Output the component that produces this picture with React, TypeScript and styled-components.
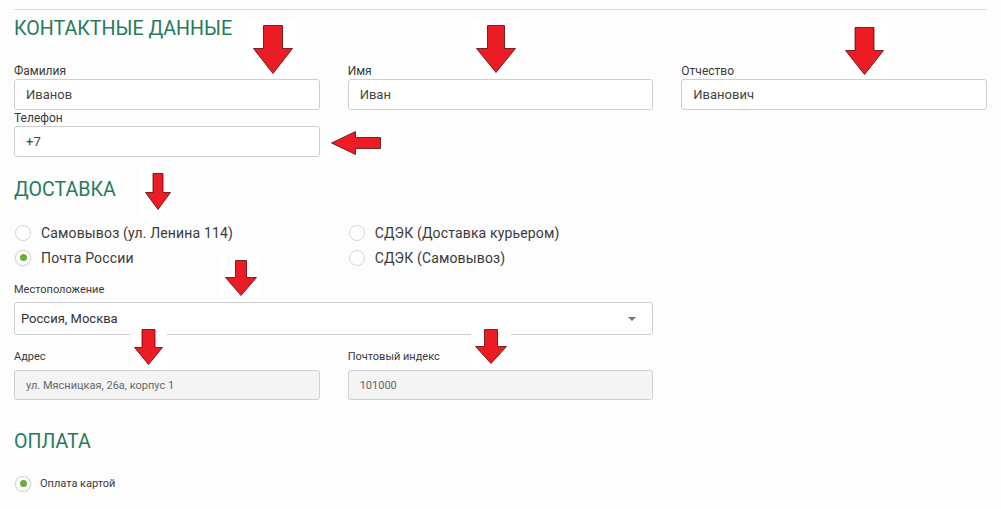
import React from 'react'
import styled, { createGlobalStyle } from 'styled-components'

const GlobalStyle = createGlobalStyle`
  html, body {
    margin: 0;
    padding: 0;
    background: #fdfdfd;
    font-family: Roboto, "Liberation Sans", Arial, sans-serif;
    color: #333;
  }
`

const Page = styled.div`
  position: relative;
  width: 1001px;
  height: 509px;
  padding: 9px 14px 0;
  box-sizing: border-box;
  overflow: hidden;
`

const Rule = styled.div`
  border-top: 1px solid #dcdcdc;
`

const Title = styled.h2<{ $top: number }>`
  margin: ${p => p.$top}px 0 0;
  font-size: 19.6px;
  line-height: 24px;
  font-weight: 400;
  color: #277a5c;
`

const Grid = styled.div<{ $top: number }>`
  display: grid;
  grid-template-columns: repeat(3, 1fr);
  column-gap: 28px;
  margin-top: ${p => p.$top}px;
`

const Field = styled.div<{ $span?: number }>`
  display: flex;
  flex-direction: column;
  grid-column: span ${p => p.$span || 1};
`

const Label = styled.label<{ $small?: boolean; $gap?: number }>`
  font-size: ${p => (p.$small ? '11px' : '12px')};
  line-height: ${p => (p.$small ? '14px' : '16px')};
  margin-bottom: ${p => p.$gap || 0}px;
  color: #3a3a3a;
`

const Input = styled.div<{ $disabled?: boolean; $h?: number }>`
  height: ${p => p.$h || 31}px;
  box-sizing: border-box;
  border: 1px solid #cfcfcf;
  border-radius: 3px;
  background: ${p => (p.$disabled ? '#f4f4f4' : '#fff')};
  display: flex;
  align-items: center;
  padding: 0 11px;
  font-size: ${p => (p.$disabled ? '11px' : '13px')};
  color: ${p => (p.$disabled ? '#666' : '#444')};
`

const Select = styled.div`
  height: 33px;
  box-sizing: border-box;
  border: 1px solid #cfcfcf;
  border-radius: 3px;
  background: #fff;
  display: flex;
  align-items: center;
  justify-content: space-between;
  padding: 0 16px 0 6px;
  font-size: 13px;
  color: #333;
`

const Caret = styled.span`
  width: 0;
  height: 0;
  border-left: 4px solid transparent;
  border-right: 4px solid transparent;
  border-top: 4px solid #777;
`

const RadioGrid = styled.div<{ $top: number }>`
  display: grid;
  grid-template-columns: repeat(3, 1fr);
  column-gap: 28px;
  margin-top: ${p => p.$top}px;
`

const RadioCol = styled.div`
  display: flex;
  flex-direction: column;
`

const RadioRow = styled.div<{ $small?: boolean }>`
  height: 25px;
  display: flex;
  align-items: center;
  gap: ${p => (p.$small ? '9px' : '10px')};
  font-size: ${p => (p.$small ? '11px' : '14px')};
  letter-spacing: ${p => (p.$small ? '0' : '0.15px')};
  color: #3a3a3a;
`

const RadioCircle = styled.span<{ $checked?: boolean }>`
  width: 16px;
  height: 16px;
  box-sizing: border-box;
  border-radius: 50%;
  border: 1px solid #d6d6d6;
  background: #fff;
  display: flex;
  align-items: center;
  justify-content: center;
  margin-left: 1px;
  box-shadow: ${p => (p.$checked ? '0 0 2px rgba(0,0,0,0.12)' : 'none')};
  &::after {
    content: '';
    width: 7px;
    height: 7px;
    border-radius: 50%;
    background: ${p => (p.$checked ? '#6cab3c' : 'transparent')};
  }
`

const ArrowBox = styled.div<{ $x: number; $y: number }>`
  position: absolute;
  left: ${p => p.$x - 4}px;
  top: ${p => p.$y - 4}px;
  padding: 4px;
  background: #fff;
  line-height: 0;
`

type ArrowProps = {
  x: number
  y: number
  w: number
  h: number
  shaft: number
  head: number
  left?: boolean
}

function Arrow({ x, y, w, h, shaft, head, left }: ArrowProps) {
  let pts: number[][]
  if (left) {
    const a = (h - shaft) / 2
    pts = [[w, a], [w, a + shaft], [head, a + shaft], [head, h], [0, h / 2], [head, 0], [head, a]]
  } else {
    const a = (w - shaft) / 2
    pts = [[a, 0], [a + shaft, 0], [a + shaft, h - head], [w, h - head], [w / 2, h], [0, h - head], [a, h - head]]
  }
  return (
    <ArrowBox $x={x} $y={y}>
      <svg width={w + 1} height={h + 1} viewBox={`-0.5 -0.5 ${w + 1} ${h + 1}`}>
        <polygon points={pts.map(p => p.join(',')).join(' ')} fill="#ec1c24" stroke="#5a0808" strokeWidth="0.8" />
      </svg>
    </ArrowBox>
  )
}

function Radio({ label, checked, small }: { label: string; checked?: boolean; small?: boolean }) {
  return (
    <RadioRow $small={small}>
      <RadioCircle $checked={checked} />
      <span>{label}</span>
    </RadioRow>
  )
}

export default function App() {
  return (
    <>
      <GlobalStyle />
      <Page>
        <Rule />
        <Title $top={7}>КОНТАКТНЫЕ ДАННЫЕ</Title>
        <Grid $top={22}>
          <Field>
            <Label>Фамилия</Label>
            <Input>Иванов</Input>
          </Field>
          <Field>
            <Label>Имя</Label>
            <Input>Иван</Input>
          </Field>
          <Field>
            <Label>Отчество</Label>
            <Input>Иванович</Input>
          </Field>
          <Field>
            <Label>Телефон</Label>
            <Input>+7</Input>
          </Field>
        </Grid>

        <Title $top={21}>ДОСТАВКА</Title>
        <RadioGrid $top={18}>
          <RadioCol>
            <Radio label="Самовывоз (ул. Ленина 114)" />
            <Radio label="Почта России" checked />
          </RadioCol>
          <RadioCol>
            <Radio label="СДЭК (Доставка курьером)" />
            <Radio label="СДЭК (Самовывоз)" />
          </RadioCol>
        </RadioGrid>

        <Grid $top={13}>
          <Field $span={2}>
            <Label $small $gap={5}>Местоположение</Label>
            <Select>
              <span>Россия, Москва</span>
              <Caret />
            </Select>
          </Field>
        </Grid>

        <Grid $top={15}>
          <Field>
            <Label $small $gap={6}>Адрес</Label>
            <Input $disabled $h={30}>ул. Мясницкая, 26а, корпус 1</Input>
          </Field>
          <Field>
            <Label $small $gap={6}>Почтовый индекс</Label>
            <Input $disabled $h={30}>101000</Input>
          </Field>
        </Grid>

        <Title $top={30}>ОПЛАТА</Title>
        <RadioGrid $top={17}>
          <RadioCol>
            <Radio label="Оплата картой" checked small />
          </RadioCol>
        </RadioGrid>

        <Arrow x={253} y={25} w={39} h={48} shaft={19} head={25} />
        <Arrow x={476} y={25} w={39} h={47} shaft={17} head={24} />
        <Arrow x={845} y={27} w={38} h={47} shaft={19} head={24} />
        <Arrow x={331} y={131} w={49} h={23} shaft={11} head={24} left />
        <Arrow x={145} y={173} w={25} h={36} shaft={10} head={17} />
        <Arrow x={225} y={260} w={31} h={35} shaft={11} head={18} />
        <Arrow x={134} y={329} w={28} h={35} shaft={13} head={17} />
        <Arrow x={475} y={329} w={31} h={34} shaft={13} head={17} />
      </Page>
    </>
  )
}
